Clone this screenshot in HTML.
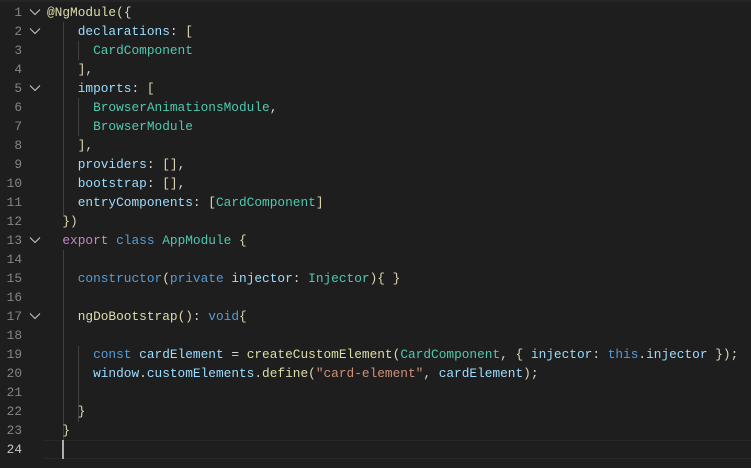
<!DOCTYPE html><html><head><style>
body{margin:0;width:751px;height:468px;background:#1e1e1e;overflow:hidden;font-family:"Liberation Mono",monospace;font-size:12.8px}
.top{position:absolute;left:0;top:0;width:751px;height:2px;background:#252526}
.l{position:absolute;left:0;height:19px;line-height:19px;white-space:pre;width:751px}
.n{position:absolute;left:0;width:22px;text-align:right;color:#858585}
.c{position:absolute;left:47px;color:#d4d4d4}
.f{position:absolute;left:29px;top:5px}
.k{color:#569cd6}.v{color:#9cdcfe}.t{color:#4ec9b0}.fn{color:#dcdcaa}.s{color:#ce9178}.p{color:#c586c0}
.b1,.b2,.b3{color:#dcd6b0}
.g{position:absolute;width:1px;background:#404040}
.cur{position:absolute;left:44px;top:440px;width:707px;height:19px;border-top:1px solid #282828;border-bottom:1px solid #282828;box-sizing:border-box}
</style></head><body>
<div class="top"></div>
<div class="cur"></div>
<div class="g" style="left:63px;top:22px;height:193px"></div>
<div class="g" style="left:78px;top:41px;height:19px"></div>
<div class="g" style="left:78px;top:98px;height:38px"></div>
<div class="g" style="left:63px;top:250px;height:190px"></div>
<div class="g" style="left:78px;top:346px;height:76px"></div>
<div class="g" style="left:62px;top:440px;width:2px;height:19px;background:#aeafad"></div>
<script>
const L=[
['1',1,0,'<span class="fn">@NgModule</span><span class="b1">(</span><span class="b2">{</span>'],
['2',1,4,'<span class="v">declarations</span>: <span class="b3">[</span>'],
['3',0,6,'<span class="t">CardComponent</span>'],
['4',0,4,'<span class="b3">]</span>,'],
['5',1,4,'<span class="v">imports</span>: <span class="b3">[</span>'],
['6',0,6,'<span class="t">BrowserAnimationsModule</span>,'],
['7',0,6,'<span class="t">BrowserModule</span>'],
['8',0,4,'<span class="b3">]</span>,'],
['9',0,4,'<span class="v">providers</span>: <span class="b3">[]</span>,'],
['10',0,4,'<span class="v">bootstrap</span>: <span class="b3">[]</span>,'],
['11',0,4,'<span class="v">entryComponents</span>: <span class="b3">[</span><span class="t">CardComponent</span><span class="b3">]</span>'],
['12',0,2,'<span class="b2">}</span><span class="b1">)</span>'],
['13',1,2,'<span class="p">export</span> <span class="k">class</span> <span class="t">AppModule</span> <span class="b1">{</span>'],
['14',0,0,''],
['15',0,4,'<span class="k">constructor</span><span class="b2">(</span><span class="k">private</span> <span class="v">injector</span>: <span class="t">Injector</span><span class="b2">)</span><span class="b2">{ }</span>'],
['16',0,0,''],
['17',1,4,'<span class="fn">ngDoBootstrap</span><span class="b2">()</span>: <span class="k">void</span><span class="b2">{</span>'],
['18',0,0,''],
['19',0,6,'<span class="k">const</span> <span class="v">cardElement</span> = <span class="fn">createCustomElement</span><span class="b3">(</span><span class="t">CardComponent</span>, <span class="b1">{</span> <span class="v">injector</span>: <span class="k">this</span>.<span class="v">injector</span> <span class="b1">}</span><span class="b3">)</span>;'],
['20',0,6,'<span class="v">window</span>.<span class="v">customElements</span>.<span class="fn">define</span><span class="b3">(</span><span class="s">"card-element"</span>, <span class="v">cardElement</span><span class="b3">)</span>;'],
['21',0,0,''],
['22',0,4,'<span class="b2">}</span>'],
['23',0,2,'<span class="b1">}</span>'],
['24',0,0,'']];
const chev='<svg class="f" width="12" height="8" viewBox="0 0 12 8"><path d="M1 1.5L6 6.5L11 1.5" fill="none" stroke="#c5c5c5" stroke-width="1.1"/></svg>';
let h='';L.forEach((x,i)=>{const top=2.5+i*19.04;
h+=`<div class="l" style="top:${top}px"><span class="n"${x[0]=='24'?' style="color:#c6c6c6"':''}>${x[0]}</span>${x[1]?chev:''}<span class="c" style="left:${47+x[2]*7.68}px">${x[3]}</span></div>`});
document.write(h);
</script>
</body></html>
